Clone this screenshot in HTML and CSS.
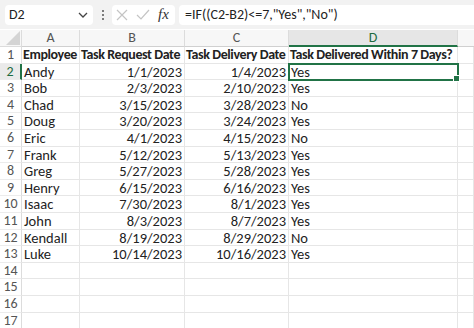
FILE: index.html
```html
<!DOCTYPE html>
<html lang="en">
<head>
    <meta charset="UTF-8">
    <title>Task Delivery</title>
    <link rel="stylesheet" href="styles.css">
</head>
<body>
    <div class="formula-bar">
        <div class="name-box">
            <span>D2</span>
            <svg class="chev" width="10" height="6" viewBox="0 0 10 6"><path d="M1 1 L5 5 L9 1" fill="none" stroke="#444" stroke-width="1.3"/></svg>
        </div>
        <div class="dots"><i></i><i></i><i></i></div>
        <div class="fx-box">
            <svg width="12" height="12" viewBox="0 0 12 12"><path d="M1 1 L11 11 M11 1 L1 11" stroke="#c4c4c4" stroke-width="1.2"/></svg>
            <svg width="14" height="12" viewBox="0 0 14 12"><path d="M1 6 L5 10 L13 1" fill="none" stroke="#c4c4c4" stroke-width="1.2"/></svg>
            <span class="fx">fx</span>
        </div>
        <div class="formula">=IF((C2-B2)&lt;=7,"Yes","No")</div>
    </div>

    <div class="sheet">
        <div class="corner"><svg width="14" height="14" viewBox="0 0 14 14"><path d="M14 0 L14 14 L0 14 Z" fill="#d4d4d4"/></svg></div>
        <div class="col-head">A</div>
        <div class="col-head">B</div>
        <div class="col-head">C</div>
        <div class="col-head active">D</div>
        <div class="col-head blank"></div>

        <div class="row-head">1</div>
        <div class="cell bold">Employee</div>
        <div class="cell bold">Task Request Date</div>
        <div class="cell bold">Task Delivery Date</div>
        <div class="cell bold">Task Delivered Within 7 Days?</div>
        <div class="cell"></div>

        <div class="row-head active">2</div>
        <div class="cell">Andy</div>
        <div class="cell num">1/1/2023</div>
        <div class="cell num">1/4/2023</div>
        <div class="cell selected">Yes</div>
        <div class="cell"></div>

        <div class="row-head">3</div>
        <div class="cell">Bob</div>
        <div class="cell num">2/3/2023</div>
        <div class="cell num">2/10/2023</div>
        <div class="cell">Yes</div>
        <div class="cell"></div>

        <div class="row-head">4</div>
        <div class="cell">Chad</div>
        <div class="cell num">3/15/2023</div>
        <div class="cell num">3/28/2023</div>
        <div class="cell">No</div>
        <div class="cell"></div>

        <div class="row-head">5</div>
        <div class="cell">Doug</div>
        <div class="cell num">3/20/2023</div>
        <div class="cell num">3/24/2023</div>
        <div class="cell">Yes</div>
        <div class="cell"></div>

        <div class="row-head">6</div>
        <div class="cell">Eric</div>
        <div class="cell num">4/1/2023</div>
        <div class="cell num">4/15/2023</div>
        <div class="cell">No</div>
        <div class="cell"></div>

        <div class="row-head">7</div>
        <div class="cell">Frank</div>
        <div class="cell num">5/12/2023</div>
        <div class="cell num">5/13/2023</div>
        <div class="cell">Yes</div>
        <div class="cell"></div>

        <div class="row-head">8</div>
        <div class="cell">Greg</div>
        <div class="cell num">5/27/2023</div>
        <div class="cell num">5/28/2023</div>
        <div class="cell">Yes</div>
        <div class="cell"></div>

        <div class="row-head">9</div>
        <div class="cell">Henry</div>
        <div class="cell num">6/15/2023</div>
        <div class="cell num">6/16/2023</div>
        <div class="cell">Yes</div>
        <div class="cell"></div>

        <div class="row-head">10</div>
        <div class="cell">Isaac</div>
        <div class="cell num">7/30/2023</div>
        <div class="cell num">8/1/2023</div>
        <div class="cell">Yes</div>
        <div class="cell"></div>

        <div class="row-head">11</div>
        <div class="cell">John</div>
        <div class="cell num">8/3/2023</div>
        <div class="cell num">8/7/2023</div>
        <div class="cell">Yes</div>
        <div class="cell"></div>

        <div class="row-head">12</div>
        <div class="cell">Kendall</div>
        <div class="cell num">8/19/2023</div>
        <div class="cell num">8/29/2023</div>
        <div class="cell">No</div>
        <div class="cell"></div>

        <div class="row-head">13</div>
        <div class="cell">Luke</div>
        <div class="cell num">10/14/2023</div>
        <div class="cell num">10/16/2023</div>
        <div class="cell">Yes</div>
        <div class="cell"></div>

        <div class="row-head">14</div>
        <div class="cell"></div><div class="cell"></div><div class="cell"></div><div class="cell"></div><div class="cell"></div>
        <div class="row-head">15</div>
        <div class="cell"></div><div class="cell"></div><div class="cell"></div><div class="cell"></div><div class="cell"></div>
        <div class="row-head">16</div>
        <div class="cell"></div><div class="cell"></div><div class="cell"></div><div class="cell"></div><div class="cell"></div>
        <div class="row-head">17</div>
        <div class="cell"></div><div class="cell"></div><div class="cell"></div><div class="cell"></div><div class="cell"></div>
    </div>
</body>
</html>
```

FILE: styles.css
```css
body {
    margin: 0;
    font-family: Carlito, Lato, "Liberation Sans", sans-serif;
    background: #fff;
    color: #222;
    overflow: hidden;
}

.formula-bar {
    display: flex;
    align-items: center;
    height: 29px;
    padding: 0 0 0 5px;
    background: #f2f2f2;
    box-sizing: border-box;
}

.name-box {
    display: flex;
    align-items: center;
    justify-content: space-between;
    width: 88px;
    height: 20px;
    padding: 0 5px 0 4px;
    box-sizing: border-box;
    background: #fff;
    border-radius: 4px;
    font-size: 14px;
}

.dots {
    display: flex;
    flex-direction: column;
    gap: 2px;
    width: 19px;
    align-items: center;
}

.dots i {
    width: 2px;
    height: 2px;
    background: #555;
    border-radius: 1px;
}

.fx-box {
    display: flex;
    align-items: center;
    gap: 8px;
    width: 63px;
    height: 20px;
    padding-left: 4px;
    box-sizing: border-box;
    background: #fff;
    border-radius: 4px;
}

.fx {
    font-family: "Liberation Serif", serif;
    font-style: italic;
    font-size: 15px;
    color: #333;
}

.formula {
    flex: 1;
    height: 20px;
    margin-left: 4px;
    padding-left: 6px;
    line-height: 20px;
    background: #fff;
    border-radius: 4px 0 0 4px;
    font-size: 14px;
}

.sheet {
    display: grid;
    grid-template-columns: 22px 58px 105px 104px 169px 1fr;
    grid-template-rows: 17px repeat(17, 16.6px);
    margin-top: 1px;
    font-size: 14.5px;
}

.corner {
    background: #f7f7f7;
    border-right: 1px solid #dcdcdc;
    border-bottom: 1px solid #dcdcdc;
    display: flex;
    align-items: flex-end;
    justify-content: flex-end;
    padding: 0 1px 1px 0;
}

.col-head {
    background: #f7f7f7;
    border-right: 1px solid #dcdcdc;
    border-bottom: 1px solid #d0d0d0;
    text-align: center;
    color: #555;
    font-size: 14px;
    line-height: 16px;
}

.col-head.active {
    background: #e6e6e6;
    border-bottom: 2px solid #217346;
    color: #1e6b41;
}

.col-head.blank {
    border-right: none;
}

.row-head {
    background: #fff;
    border-right: 1px solid #dcdcdc;
    border-bottom: 1px solid #ececec;
    color: #555;
    font-size: 14px;
    text-align: center;
    line-height: 16px;
}

.row-head.active {
    background: #eaeaea;
    border-right: 2px solid #217346;
    color: #1e6b41;
}

.cell {
    border-right: 1px solid #e6e6e6;
    border-bottom: 1px solid #e6e6e6;
    padding: 0 2px;
    line-height: 16px;
    white-space: nowrap;
    overflow: visible;
}

.bold {
    font-weight: bold;
    font-size: 14px;
    letter-spacing: -0.4px;
    padding-left: 1px;
}

.num {
    text-align: right;
}

.selected {
    position: relative;
    outline: 2px solid #217346;
    outline-offset: -1px;
}

.selected::after {
    content: "";
    position: absolute;
    right: -3px;
    bottom: -3px;
    width: 5px;
    height: 5px;
    background: #217346;
    border: 1px solid #fff;
}
```
